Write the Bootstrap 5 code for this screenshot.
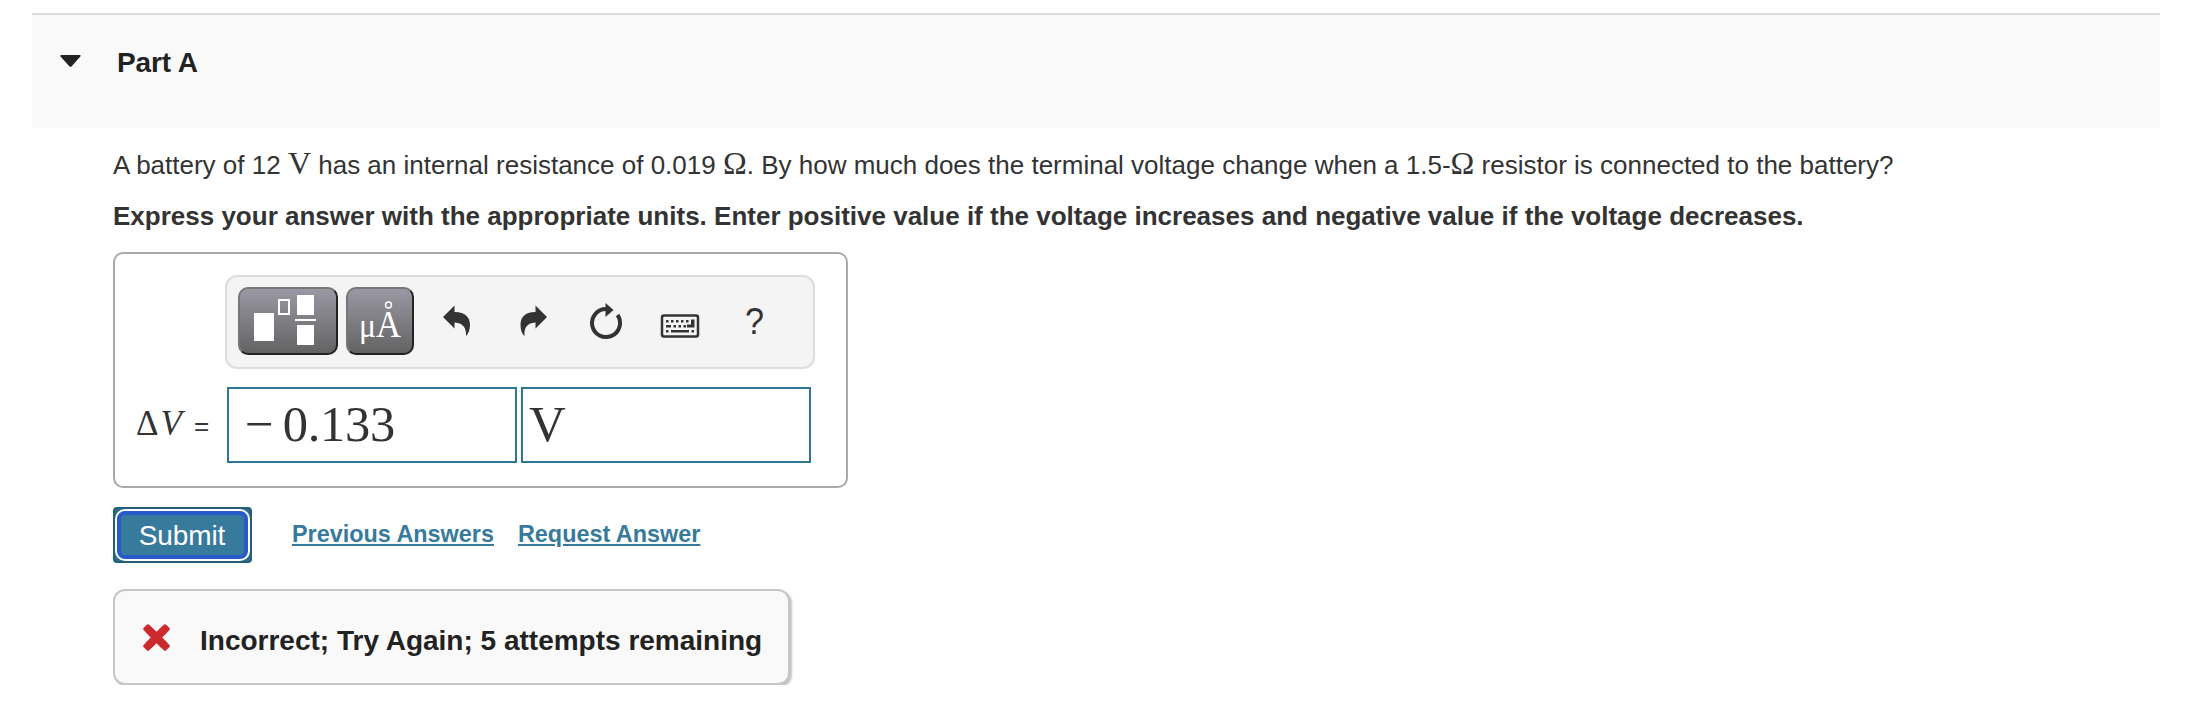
<!DOCTYPE html>
<html lang="en">
<head>
<meta charset="utf-8">
<title>Part A</title>
<link href="https://cdn.jsdelivr.net/npm/bootstrap@5.3.0/dist/css/bootstrap.min.css" rel="stylesheet">
<style>
body{font-family:"Liberation Sans",Arial,sans-serif;color:#333;background:#fff;font-size:26px}
.part-head{margin:13px 29px 0 32px;height:115px;background:#f9f9f9;border-top:2px solid #ddd;padding:27px 0 0 28px}
.part-title{font-size:28px;line-height:41px;font-weight:700;color:#222;margin:0 0 0 35px;letter-spacing:-.1px}
.caret-icon{margin-top:13px}
.part-body{margin-left:113px;padding-top:12px}
.prompt{line-height:50px;white-space:nowrap;margin:0;width:max-content}
.hint{font-weight:700;margin-top:1px}
.tex{font-family:"Liberation Serif","Times New Roman",serif;line-height:0}
.prompt .tex{font-size:32px}
.answer-box{width:735px;height:236px;margin-top:11px;border:2px solid #aaa;border-radius:10px}
.toolbar{width:590px;height:94px;margin:21px 0 0 110px;padding:10px 11px;border:2px solid #ddd;border-radius:12px;background:#f4f4f4}
.tool-btn{height:68px;border:2px solid;border-color:#777 #222 #222 #777;border-radius:10px;background:linear-gradient(#9a98a3,#636363);padding:0;color:#fff}
.tool-btn svg,.tool-icon svg{display:block}
.tool-icon{border:0;background:none;padding:0}
.btn-wide{width:100px}
.btn-square{width:68px}
.answer-row{margin-top:18px;height:76px}
.var-label{width:112px;padding-left:21px;line-height:73px;font-size:35px;white-space:nowrap}
.var-label i{margin-left:2px}
.equals{font-family:"Liberation Sans",sans-serif;font-size:26px;margin-left:12px}
.field{width:290px;height:76px;border:2px solid #2e7697;background:#fff;font-size:51px;line-height:71px;white-space:nowrap}
.field-value{padding-left:16px}
.field-value .digits{margin-left:9px;font-size:50.5px;letter-spacing:-.3px}
.field-unit{padding-left:6px}
.actions{margin-top:19px;height:56px}
.submit-btn{width:139px;height:56px;padding:2px;border:2px solid #255f77;border-radius:4px;background:#2e6d8a;color:#fff}
.submit-btn span{display:block;width:131px;height:48px;border:4px solid #265bc9;border-radius:8px;background:#377a9c;box-shadow:0 0 0 2px #fff;font-size:28px;line-height:42px;letter-spacing:-.1px;padding-right:1px}
.ans-link{font-size:23.4px;font-weight:700;color:#377a9c;line-height:54px;text-decoration:underline;text-decoration-thickness:2px;text-underline-offset:2px;white-space:nowrap}
.feedback{width:677px;height:96px;margin-top:26px;border:2px solid #c6c6c6;border-radius:12px;background:#f9f9f9;box-shadow:2px 2px 2px #c4c4c4;color:#222;font-size:28px;font-weight:700;padding-left:28px}
.feedback-text{margin-left:30px;padding-top:7px}
</style>
</head>
<body>
<header class="part-head d-flex align-items-start">
  <svg class="caret-icon" width="22" height="13" viewBox="0 0 22 13"><path d="M1 0H20.200Q21 .8 20.300 1.600L11.700 11.300Q10.500 12.300 9.300 11.300L.5 1.600Q-.2.7 1 0Z" fill="#222"/></svg>
  <h2 class="part-title">Part A</h2>
</header>
<main class="part-body">
  <p class="prompt">A battery of 12 <span class="tex">V</span> has an internal resistance of 0.019 <span class="tex">Ω</span>. By how much does the terminal voltage change when a 1.5-<span class="tex">Ω</span> resistor is connected to the battery?</p>
  <p class="prompt hint">Express your answer with the appropriate units. Enter positive value if the voltage increases and negative value if the voltage decreases.</p>
  <section class="answer-box">
    <div class="toolbar d-flex">
      <button class="tool-btn btn-wide" aria-label="Templates"><svg width="96" height="64" viewBox="0 0 96 64" fill="#fff"><path d="M14 24h20v28H14zM57 6h17v20H57zM57 36h17v20H57zM55 30h21v2H55z"/><path d="M39 11h10v14H39z" fill="none" stroke="#fff" stroke-width="2"/></svg></button>
      <button class="tool-btn btn-square ms-2" aria-label="Units"><svg width="64" height="64" viewBox="0 0 64 64" fill="#fff" font-family="Liberation Serif, serif"><text x="11" y="47.500" font-size="34" textLength="17" lengthAdjust="spacingAndGlyphs">μ</text><text x="28" y="47.500" font-size="37" textLength="25" lengthAdjust="spacingAndGlyphs">A</text><circle cx="40.500" cy="16" r="3" fill="none" stroke="#fff" stroke-width="1.400"/></svg></button>
      <div class="tool-icon"><svg width="385" height="68" viewBox="414 287 385 68" fill="#333">
        <path d="M443 317L454.500 305.500V312C466 312 470 318 470 325C470 330 468 334 466 336C466.500 329 464 323 454.500 322.500V328.500Z"/>
        <path d="M547 317L535.500 305.500V312C524 312 520.500 318 520.500 325C520.500 330 522 334 524.500 336C524 329 526 323 535.500 322.500V328.500Z"/>
        <path d="M606 309A14 14 0 1 0 617.500 315" fill="none" stroke="#333" stroke-width="4"/>
        <path d="M605.500 303L613.500 310L605.500 317Z"/>
        <rect x="662" y="315.500" width="36" height="21" rx="2" fill="none" stroke="#333" stroke-width="2.500"/>
        <path d="M666 320h2.500v2.500h-2.500zm5 0h2.500v2.500H671zm5 0h2.500v2.500H676zm5 0h2.500v2.500H681zm5 0h2.500v2.500H686zm5-.5h3.500v8H687v-3h4zM666 325h5v2.500h-5zm7.500 0h2.500v2.500h-2.500zm5 0h2.500v2.500h-2.500zm5 0h2.500v2.500h-2.500zM666 330h2.500v2.500h-2.500zm5 0h18v2.500H671zm20.500 0h2.500v2.500h-2.500z"/>
        <text x="745" y="333.500" font-family="Liberation Sans, sans-serif" font-size="37" textLength="19" lengthAdjust="spacingAndGlyphs">?</text>
      </svg></div>
    </div>
    <div class="answer-row d-flex">
      <div class="var-label tex">Δ<i>V</i><span class="equals">=</span></div>
      <div class="field field-value tex"><span>−</span><span class="digits">0.133</span></div>
      <div class="field field-unit tex ms-1">V</div>
    </div>
  </section>
  <div class="actions d-flex">
    <button class="submit-btn"><span>Submit</span></button>
    <a href="#" class="ans-link" style="margin-left:40px">Previous Answers</a>
    <a href="#" class="ans-link ms-4">Request Answer</a>
  </div>
  <div class="feedback d-flex align-items-center">
    <svg width="27" height="28" viewBox="0 0 27 28"><path d="M5.500 6.500L21.500 22.500M21.500 6.500L5.500 22.500" stroke="#cb2a2e" stroke-width="8"/><path d="M5.500 6.500L21.500 22.500M21.500 6.500L5.500 22.500" stroke="#cb2a2e" stroke-width="4"/><path d="M5 3L2 6L22 26L25 23ZM22 3L25 6L5 26L2 23Z" fill="#cb2a2e" stroke="#cb2a2e" stroke-width="3.500" stroke-linejoin="round"/></svg>
    <span class="feedback-text">Incorrect; Try Again; 5 attempts remaining</span>
  </div>
</main>
<script src="https://cdn.jsdelivr.net/npm/bootstrap@5.3.0/dist/js/bootstrap.bundle.min.js"></script>
</body>
</html>
